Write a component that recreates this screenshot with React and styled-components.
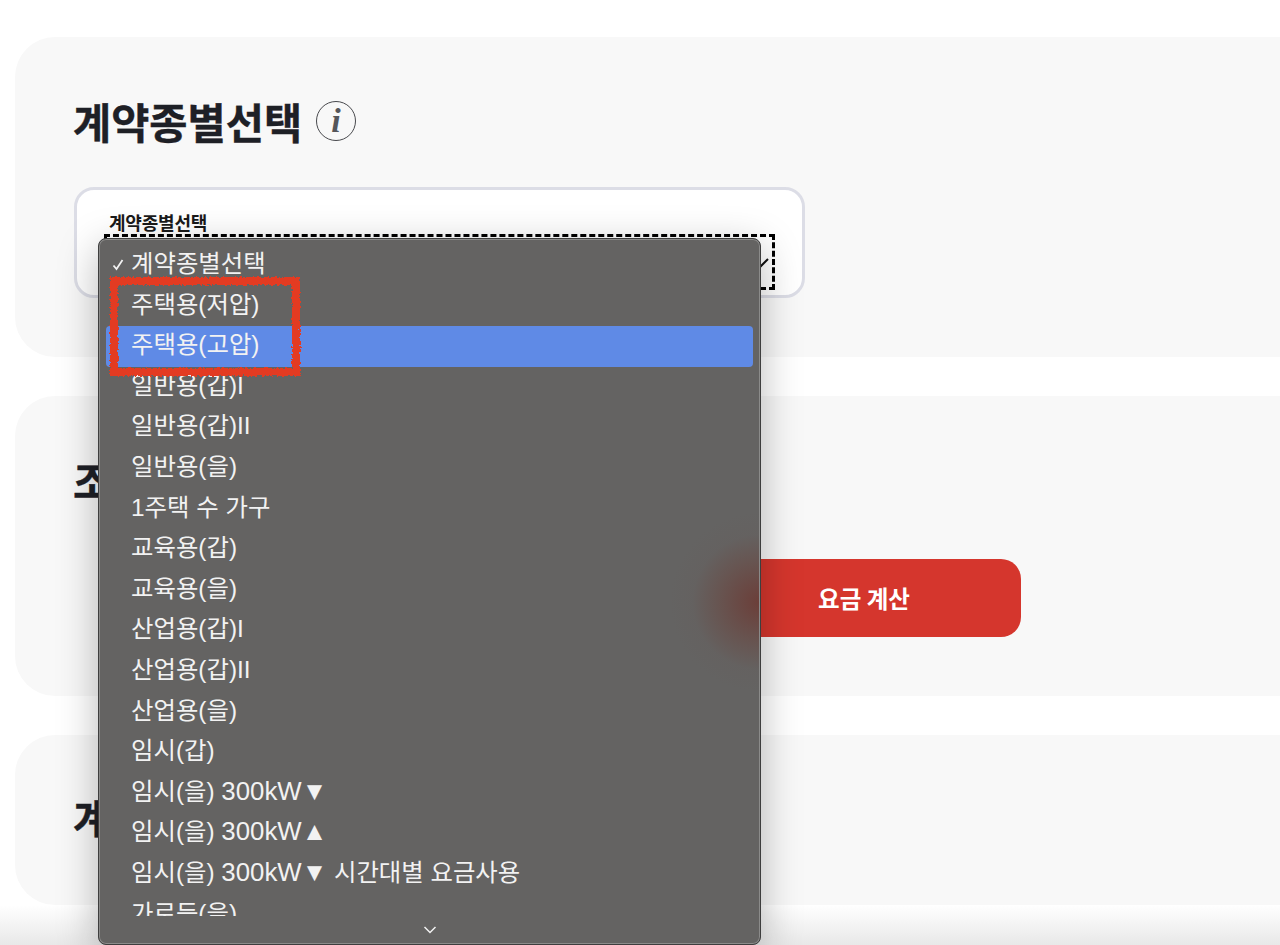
import React from 'react';
import styled, { createGlobalStyle } from 'styled-components';

const GlobalStyle = createGlobalStyle`
  html, body {
    margin: 0;
    height: 945px;
    overflow: hidden;
    background: #fff;
    font-family: "Noto Sans CJK KR", "Liberation Sans", sans-serif;
  }
`

const Page = styled.div`
  position: relative;
  width: 1280px;
  height: 945px;
  overflow: hidden;
  padding: 37px 0 0 15px;
  box-sizing: border-box;
  display: flex;
  flex-direction: column;
  gap: 39px;

  &::after {
    content: '';
    position: absolute;
    left: 0;
    right: 0;
    bottom: 0;
    height: 40px;
    background: linear-gradient(to bottom, rgba(230, 230, 230, 0), #e8e8e8);
  }
`

const Card = styled.section`
  flex: none;
  width: 1400px;
  height: ${ props => props.height }px;
  box-sizing: border-box;
  padding: ${ props => props.top }px 0 0 59px;
  background: #f8f8f8;
  border-radius: 40px;
`

const TitleRow = styled.div`
  display: flex;
  align-items: center;
  gap: 14px;
  height: 50px;
`

const Title = styled.h2`
  margin: 0 0 0 -1px;
  font-size: 41.5px;
  line-height: 50px;
  font-weight: 700;
  -webkit-text-stroke: 0.4px #1e2026;
  color: #1e2026;
`

const InfoBadge = styled.span`
  width: 40px;
  height: 40px;
  box-sizing: border-box;
  border: 1.5px solid #48494d;
  border-radius: 50%;
  display: flex;
  align-items: center;
  justify-content: center;
  font-family: "Liberation Serif", serif;
  font-style: italic;
  font-weight: 700;
  font-size: 34px;
  color: #55565a;
`

const SelectBox = styled.div`
  width: 731px;
  height: 111px;
  margin-top: 41px;
  box-sizing: border-box;
  padding: 20px 27px 0 27px;
  background: #fff;
  border: 3px solid #dcdde6;
  border-radius: 20px;
`

const SelectLabel = styled.div`
  margin-left: 5px;
  font-size: 18px;
  line-height: 24px;
  font-weight: 700;
  letter-spacing: -0.2px;
  color: #1a1a1a;
`

const SelectField = styled.div`
  height: 56px;
  box-sizing: border-box;
  border: 3px dashed #000;
  display: flex;
  align-items: center;
  justify-content: flex-end;
  padding-right: 1px;
`

const ButtonRow = styled.div`
  display: flex;
  justify-content: flex-start;
  margin: 54px 0 0 633px;
`

const CalcButton = styled.button`
  width: 314px;
  height: 78px;
  border: 0;
  border-radius: 20px;
  background: #d5362d;
  color: #fff;
  font-family: inherit;
  font-size: 23.5px;
  font-weight: 700;
`

const Menu = styled.div`
  position: absolute;
  left: 98px;
  top: 238px;
  width: 663px;
  height: 707px;
  box-sizing: border-box;
  padding: 6px 7px 0;
  border: 1px solid #3e3e3e;
  border-radius: 8px;
  background:
    radial-gradient(
      ellipse 90px 90px at 100% 51.5%,
      rgba(108, 58, 52, 0.9),
      rgba(106, 72, 66, 0.55) 45%,
      rgba(102, 90, 88, 0.18) 75%,
      rgba(100, 99, 98, 0) 100%
    ),
    #646362;
  box-shadow: inset 0 0 0 1px #8b8b8a, 0 10px 40px rgba(0, 0, 0, 0.28);
  z-index: 2;
`

const MenuList = styled.ul`
  margin: 0;
  padding: 0;
  height: 671px;
  overflow: hidden;
  list-style: none;
`

const MenuItem = styled.li`
  position: relative;
  height: 40.6px;
  line-height: 37px;
  padding-left: 25px;
  border-radius: 4px;
  font-family: "Liberation Sans", "Noto Sans CJK KR", sans-serif;
  font-size: 24.4px;
  white-space: nowrap;
  color: #f2f2f2;
  background: ${ props => (props.active ? '#5f8ae6' : 'transparent') };
`

const Rating = styled.span`
  font-size: 25.8px;
`

const Check = styled.svg`
  position: absolute;
  left: 6px;
  top: 14px;
`

const ScrollHint = styled.svg`
  display: block;
  margin: 9px auto 0;
`

const Scribble = styled.svg`
  position: absolute;
  left: 105px;
  top: 272px;
  z-index: 3;
`

const items = [
  ['계약종별선택'],
  ['주택용(저압)'],
  ['주택용(고압)'],
  ['일반용(갑)I'],
  ['일반용(갑)II'],
  ['일반용(을)'],
  ['1주택 수 가구'],
  ['교육용(갑)'],
  ['교육용(을)'],
  ['산업용(갑)I'],
  ['산업용(갑)II'],
  ['산업용(을)'],
  ['임시(갑)'],
  ['임시(을) ', '300kW▼'],
  ['임시(을) ', '300kW▲'],
  ['임시(을) ', '300kW▼', ' 시간대별 요금사용'],
  ['가로등(을)'],
];

export default () => {
  return <Page>
    <GlobalStyle />
    <Card height={ 320 } top={ 59 }>
      <TitleRow>
        <Title>계약종별선택</Title>
        <InfoBadge>i</InfoBadge>
      </TitleRow>
      <SelectBox>
        <SelectLabel>계약종별선택</SelectLabel>
        <SelectField>
          <svg width="20" height="20" viewBox="0 0 20 20" fill="none" stroke="#111" strokeWidth="2">
            <path d="M3 7l7 7 7-7" />
          </svg>
        </SelectField>
      </SelectBox>
    </Card>
    <Card height={ 300 } top={ 59 }>
      <TitleRow>
        <Title>조회기간</Title>
      </TitleRow>
      <ButtonRow>
        <CalcButton>요금 계산</CalcButton>
      </ButtonRow>
    </Card>
    <Card height={ 170 } top={ 57 }>
      <TitleRow>
        <Title>계산결과</Title>
      </TitleRow>
    </Card>
    <Menu>
      <MenuList>
        { items.map(([name, rating, note], i) => (
          <MenuItem key={ i } active={ i === 2 ? 1 : undefined }>
            { i === 0 &&
              <Check width="12" height="12" viewBox="0 0 12 12" fill="none" stroke="#f2f2f2" strokeWidth="1.8">
                <path d="M1.5 6.5l3 3.5 6-9" />
              </Check> }
            { name }
            { rating && <Rating>{ rating }</Rating> }
            { note }
          </MenuItem>
        )) }
      </MenuList>
      <ScrollHint width="14" height="10" viewBox="0 0 14 10" fill="none" stroke="#f2f2f2" strokeWidth="1.5">
        <path d="M1.5 2l5.5 5.5L12.5 2" />
      </ScrollHint>
    </Menu>
    <Scribble width="200" height="110" viewBox="0 0 200 110" fill="none">
      <filter id="rough" x="-5%" y="-5%" width="110%" height="110%">
        <feTurbulence type="fractalNoise" baseFrequency="0.4" numOctaves="2" seed="4" />
        <feDisplacementMap in="SourceGraphic" scale="5" />
      </filter>
      <rect x="9" y="9" width="182" height="91" stroke="#e33a22" strokeWidth="8" filter="url(#rough)" />
    </Scribble>
  </Page>;
}
